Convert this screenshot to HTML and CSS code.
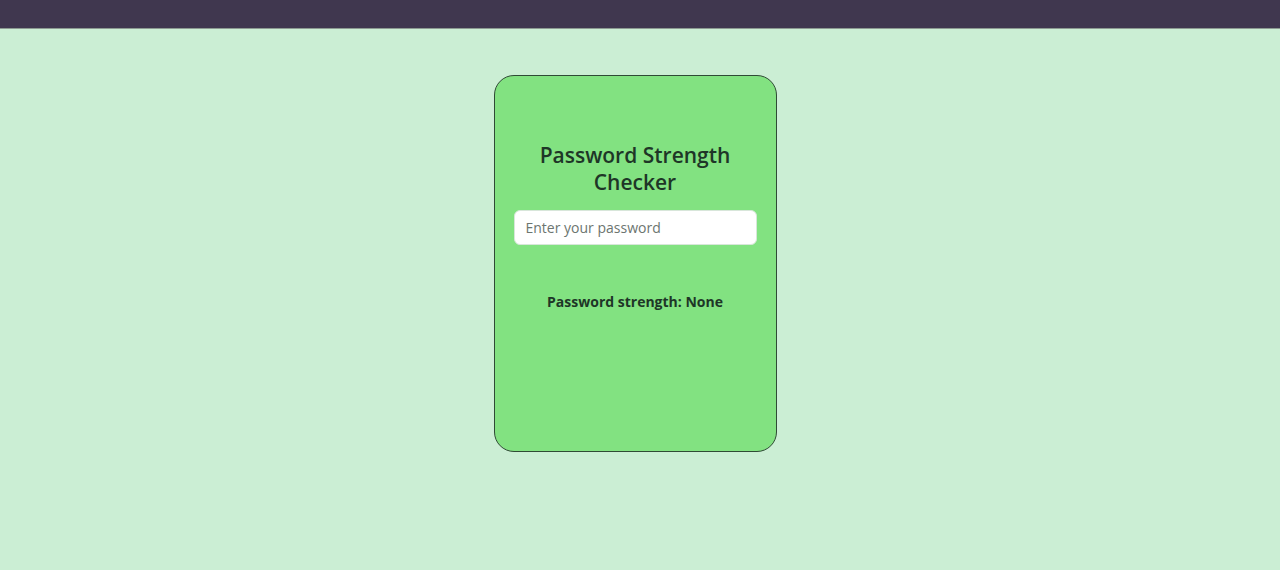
FILE: index.html
```html
<!DOCTYPE html>
<html lang="en">
<head>
<meta charset="utf-8">
<title>Password Strength Checker</title>
<link rel="stylesheet" href="styles.css">
</head>
<body>
<header class="topbar"></header>
<main class="page">
  <section class="card">
    <h2 class="title">Password Strength Checker</h2>
    <input class="pw-input" type="password" placeholder="Enter your password">
    <p class="strength">Password strength: None</p>
  </section>
</main>
</body>
</html>
```
FILE: styles.css
```css
* { box-sizing: border-box; }
html, body { margin: 0; padding: 0; }
body {
  background: #cbeed4;
  font-family: "Open Sans", "Noto Sans", sans-serif;
  color: #1e3627;
  height: 570px;
}
.topbar {
  height: 29px;
  background: #40374f;
  border-bottom: 1px solid #8d9a92;
}
.page {
  display: flex;
  justify-content: center;
  padding-top: 46px;
  padding-right: 10px;
}
.card {
  width: 283px;
  height: 377px;
  background: #82e281;
  border: 1px solid #2f4a35;
  border-radius: 20px;
  padding: 66px 19px 20px;
  display: flex;
  flex-direction: column;
  align-items: stretch;
}
.title {
  margin: 0 0 14px;
  font-size: 21px;
  font-weight: 600;
  line-height: 27px;
  text-align: center;
  color: #1e3627;
}
.pw-input {
  height: 35px;
  width: 100%;
  border: 1px solid #d8e6da;
  border-radius: 6px;
  padding: 0 11px;
  font-family: inherit;
  font-size: 14px;
  background: #fff;
  color: #333;
  outline: none;
}
.pw-input::placeholder { color: #6c7570; }
.strength {
  margin: 47px 0 0;
  text-align: center;
  font-weight: 700;
  font-size: 14px;
  line-height: 20px;
}
```
